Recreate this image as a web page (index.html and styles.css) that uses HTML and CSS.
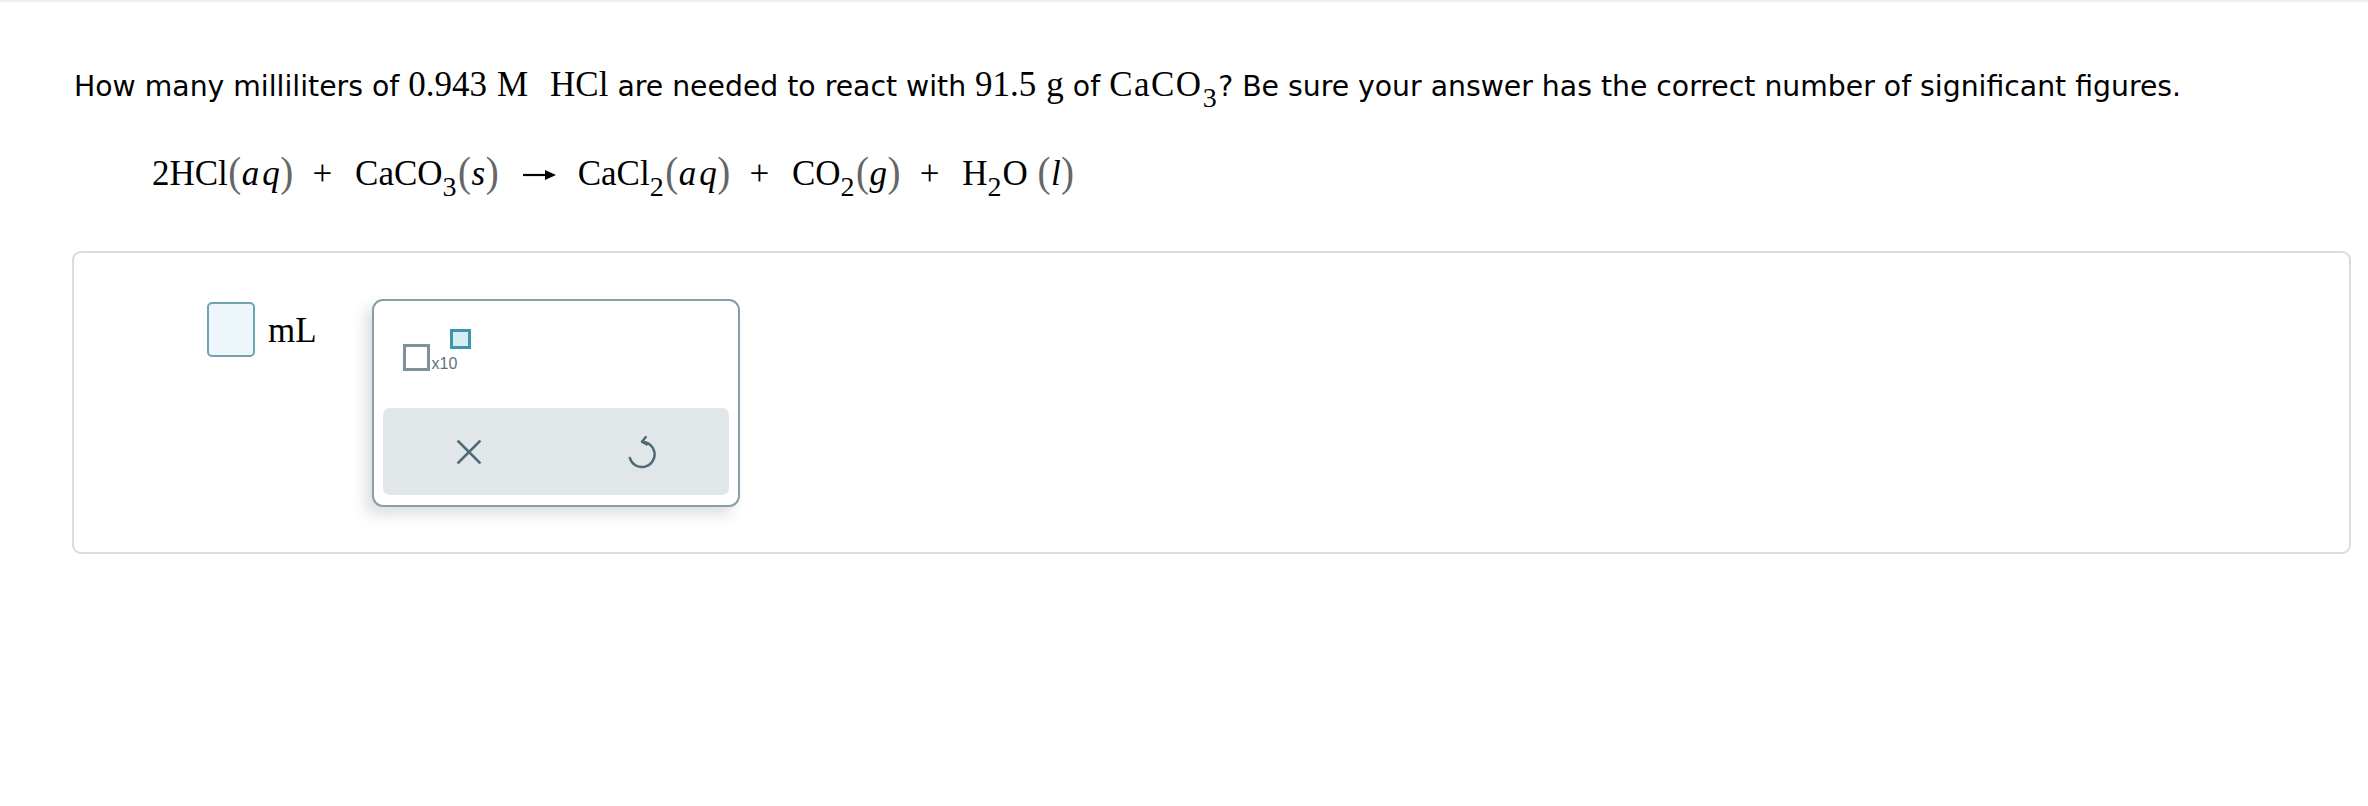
FILE: index.html
```html
<!DOCTYPE html>
<html>
<head>
<meta charset="utf-8">
<link rel="stylesheet" href="styles.css">
</head>
<body>
<div class="page">
  <p class="question">How many milliliters of <span class="m">0.943<span class="sp"></span>M<span class="sp2"></span>HCl</span> are needed to react with <span class="m">91.5<span class="sp"></span>g</span> of <span class="m chem">CaCO<span class="sub">3</span></span>? Be sure your answer has the correct number of significant figures.</p>
  <div class="equation">
    <span>2HCl</span><span class="par">(</span><span class="it">a</span><span class="it q">q</span><span class="par">)</span>
    <span class="op">+</span>
    <span>CaCO<span class="sub">3</span></span><span class="par">(</span><span class="it">s</span><span class="par">)</span>
    <svg class="arrow" width="33" height="14" viewBox="0 0 33 14"><path d="M0 7 H25" stroke="#000" stroke-width="2.2"/><path d="M22 2 L33 7 L22 12 Z" fill="#000"/></svg>
    <span>CaCl<span class="sub">2</span></span><span class="par">(</span><span class="it">a</span><span class="it q">q</span><span class="par">)</span>
    <span class="op">+</span>
    <span>CO<span class="sub">2</span></span><span class="par">(</span><span class="it">g</span><span class="par">)</span>
    <span class="op">+</span>
    <span>H<span class="sub">2</span>O</span><span class="gap"></span><span class="par">(</span><span class="it">l</span><span class="par">)</span>
  </div>
  <div class="answer">
    <div class="answer-row">
      <div class="input"></div>
      <span class="unit">mL</span>
      <div class="popup">
        <div class="sci">
          <span class="base-box"></span><span class="x10">x10</span><span class="exp-box"></span>
        </div>
        <div class="tools">
          <button class="tool" type="button" aria-label="clear">
            <svg width="30" height="30" viewBox="0 0 24 24"><path d="M3.5 3.5 L20.5 20.5 M20.5 3.5 L3.5 20.5" stroke="#4d6a75" stroke-width="2.2" stroke-linecap="round" fill="none"/></svg>
          </button>
          <button class="tool" type="button" aria-label="undo">
            <svg width="38" height="38" viewBox="0 0 24 24"><path d="M12 5.5 A8 8 0 1 1 4.3 15.7" stroke="#4d6a75" stroke-width="1.5" stroke-linecap="round" fill="none"/><path d="M14.4 2.6 L12 5.5 L15 7.2" stroke="#4d6a75" stroke-width="1.5" stroke-linecap="round" stroke-linejoin="round" fill="none"/></svg>
          </button>
        </div>
      </div>
    </div>
  </div>
</div>
</body>
</html>
```

FILE: styles.css
```css
html, body {
  margin: 0;
  padding: 0;
  background: #ffffff;
}
.page {
  border-top: 2px solid #efefef;
  font-family: "DejaVu Sans", Verdana, sans-serif;
  color: #000;
}
.question {
  margin: 65px 0 0 74px;
  font-size: 28.3px;
  line-height: 40px;
  white-space: nowrap;
}
.m {
  font-family: "Liberation Serif", "Times New Roman", serif;
  font-size: 35px;
  line-height: 1;
}
.chem { letter-spacing: 1.5px; }
.sp { display: inline-block; width: 10px; }
.sp2 { display: inline-block; width: 22px; }
.sub {
  font-size: 0.8em;
  position: relative;
  top: 0.4em;
  line-height: 0;
}
.equation {
  margin: 45px 0 0 152px;
  font-family: "Liberation Serif", "Times New Roman", serif;
  font-size: 35px;
  line-height: 44px;
  white-space: nowrap;
}
.equation .sub { margin-right: 1px; }
.par {
  color: #666;
  font-size: 39px;
  line-height: 1;
  display: inline-block;
  transform: scaleY(1.1);
  margin: 0 0.5px;
}
.it { font-style: italic; }
.q { margin-left: 3px; }
.op { margin: 0 14px 0 10px; }
.arrow {
  margin: 0 13px 0 15px;
  vertical-align: 3px;
}
.gap { display: inline-block; width: 9px; }
.answer {
  margin: 55px 17px 0 72px;
  height: 299px;
  border: 2px solid #d6dcdf;
  border-radius: 9px;
}
.answer-row {
  display: flex;
  align-items: flex-start;
  padding: 46px 0 0 133px;
}
.input {
  width: 44px;
  height: 51px;
  margin-top: 3px;
  border: 2px solid #6fa3b2;
  border-radius: 5px;
  background: #edf6fa;
}
.unit {
  margin: 12px 0 0 13px;
  font-family: "Liberation Serif", "Times New Roman", serif;
  font-size: 35px;
  line-height: 40px;
}
.popup {
  margin-left: 55px;
  width: 364px;
  height: 204px;
  border: 2px solid #8a9ea6;
  border-radius: 11px;
  box-sizing: content-box;
  background: #fff;
  box-shadow: -7px 8px 14px rgba(60, 80, 90, 0.18);
  display: flex;
  flex-direction: column;
}
.sci {
  height: 107px;
  display: flex;
  align-items: flex-start;
  padding-left: 29px;
}
.base-box {
  margin-top: 43px;
  width: 21px;
  height: 21px;
  border: 3px solid #7d939c;
}
.x10 {
  margin-top: 55px;
  margin-left: 2px;
  font-family: "Liberation Sans", Arial, sans-serif;
  font-size: 16px;
  line-height: 16px;
  color: #5a737d;
}
.exp-box {
  margin-top: 28px;
  margin-left: -7px;
  width: 15px;
  height: 14px;
  border: 3px solid #3f95ab;
  background: #d6eef3;
}
.tools {
  margin: 0 9px 0 9px;
  height: 87px;
  background: #e1e6e9;
  border-radius: 7px;
  display: flex;
}
.tool {
  flex: 1;
  border: 0;
  background: transparent;
  padding: 0;
  display: flex;
  align-items: center;
  justify-content: center;
}
```
